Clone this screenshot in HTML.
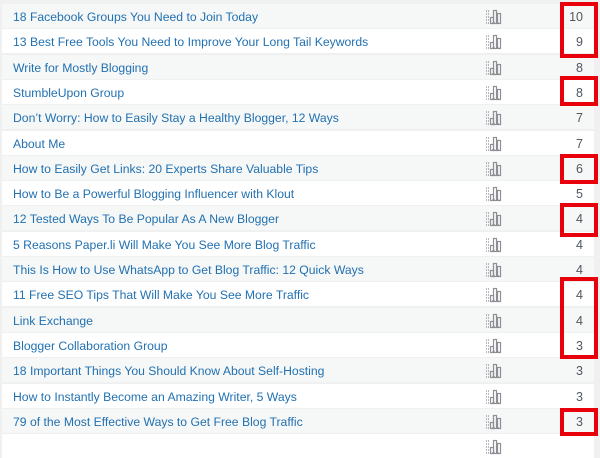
<!DOCTYPE html>
<html><head><style>
body{margin:0;width:600px;height:440px;overflow:hidden;background:#f0f0f1;position:relative;font-family:"Liberation Sans",sans-serif;}
.r{position:absolute;left:2px;width:592px;height:25px;border-top:1px solid #f0f0f0;box-sizing:border-box}
.g{background:#f6f7f7}.w{background:#fff}
.t{position:absolute;left:11px;top:6px;font-size:12.2px;color:#2271b1;white-space:nowrap}
.n{position:absolute;right:11px;top:6px;font-size:12.5px;color:#50575e}
.i{position:absolute;left:483px;top:4px}
.b{position:absolute;border:4px solid #e8000b;left:560px;width:30px;box-sizing:content-box}
</style></head><body>
<div id="c"></div>
<script>
(function(){
var d=[["18 Facebook Groups You Need to Join Today",10],["13 Best Free Tools You Need to Improve Your Long Tail Keywords",9],["Write for Mostly Blogging",8],["StumbleUpon Group",8],["Don’t Worry: How to Easily Stay a Healthy Blogger, 12 Ways",7],["About Me",7],["How to Easily Get Links: 20 Experts Share Valuable Tips",6],["How to Be a Powerful Blogging Influencer with Klout",5],["12 Tested Ways To Be Popular As A New Blogger",4],["5 Reasons Paper.li Will Make You See More Blog Traffic",4],["This Is How to Use WhatsApp to Get Blog Traffic: 12 Quick Ways",4],["11 Free SEO Tips That Will Make You See More Traffic",4],["Link Exchange",4],["Blogger Collaboration Group",3],["18 Important Things You Should Know About Self-Hosting",3],["How to Instantly Become an Amazing Writer, 5 Ways",3],["79 of the Most Effective Ways to Get Free Blog Traffic",3],["",""]];
var ic='<svg class="i" width="18" height="18" viewBox="0 0 18 18"><g fill="none" stroke="#8c8f94" stroke-width="1.2"><path d="M1 3h4M1 6h4M1 9h4M1 12h4M1 15h16" stroke-dasharray="1 1"/><rect x="5.5" y="9.5" width="3" height="6"/><rect x="8.5" y="2.5" width="3" height="13"/><rect x="12.5" y="5.5" width="3" height="10"/></g></svg>';
var h='';
for(var k=0;k<d.length;k++){var yy=Math.round(3+25.3*k);h+='<div class="r '+(k%2?'w':'g')+'" style="top:'+yy+'px"><span class="t">'+d[k][0]+'</span>'+ic+'<span class="n">'+d[k][1]+'</span></div>';}
var bx=[[2,58],[76,106],[154,184],[203,237],[277,359],[408,436]];
bx.forEach(function(b){h+='<div class="b" style="top:'+b[0]+'px;height:'+(b[1]-b[0]-8)+'px"></div>';});
document.getElementById('c').innerHTML=h;
})();
</script>
</body></html>
